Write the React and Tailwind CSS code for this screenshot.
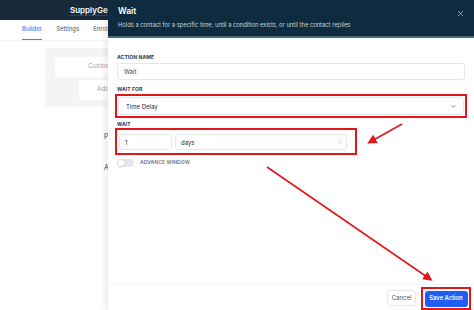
import { X, ChevronDown, ChevronsUpDown } from 'lucide-react';

const Label = ({ children }) => (
    <div className="text-[5px] font-bold tracking-[0.02em] text-[#2d3748] leading-none">{children}</div>
);

function BackgroundPage() {
    return (
        <div className="absolute inset-0 bg-white">
            {/* top bar */}
            <div className="h-[20px] bg-[#182a3a] flex items-center pl-[70px]">
                <span className="text-[8px] font-semibold text-white border-b border-[#8a2030] leading-[10px]">SupplyGen</span>
            </div>
            {/* tabs */}
            <div className="h-[21px] flex items-end gap-[14px] pl-[22px] border-b border-gray-100 text-[6px]">
                <div className="text-[#3b82f6] font-medium pb-[6px] border-b border-[#3b82f6]">Builder</div>
                <div className="text-gray-600 pb-[7px]">Settings</div>
                <div className="text-gray-600 pb-[7px]">Enrollment</div>
            </div>
            {/* workflow canvas */}
            <div className="ml-[45px] mt-[7px] w-[80px] h-[59px] bg-[#f3f4f6] rounded-[3px] pt-[9px] pl-[10px] flex flex-col gap-[3px]">
                <div className="h-[20px] w-[70px] bg-white rounded-[3px] flex items-center pl-[33px] text-[6.5px] text-gray-400">Custom</div>
                <div className="h-[20px] w-[46px] ml-[24px] bg-white rounded-[3px] flex items-center pl-[18px] text-[6.5px] text-gray-400">Add</div>
            </div>
            <div className="ml-[104px] mt-[26px] text-[7px] text-gray-700 leading-none">P</div>
            <div className="ml-[104px] mt-[24px] text-[7px] text-gray-700 leading-none">A</div>
        </div>
    );
}

function Arrows() {
    return (
        <svg className="absolute inset-0 pointer-events-none" width="474" height="310" viewBox="0 0 474 310">
            <defs>
                <marker id="head" markerWidth="6" markerHeight="6" refX="4" refY="3" orient="auto" markerUnits="strokeWidth">
                    <path d="M0,0 L6,3 L0,6 Z" fill="#e3161c" />
                </marker>
            </defs>
            <line x1="402" y1="124" x2="370" y2="142" stroke="#e3161c" strokeWidth="1.6" markerEnd="url(#head)" />
            <line x1="267" y1="167" x2="430" y2="279" stroke="#e3161c" strokeWidth="1.6" markerEnd="url(#head)" />
        </svg>
    );
}

export default function App() {
    return (
        <div className="relative w-[474px] h-[310px] overflow-hidden bg-white" style={{ fontFamily: 'Inter, "Liberation Sans", sans-serif' }}>
            <BackgroundPage />

            {/* side panel */}
            <div className="absolute top-0 right-0 w-[366px] h-full bg-white flex flex-col shadow-[-3px_0_6px_rgba(0,0,0,0.08)]">
                <div className="h-[38px] bg-[#0e2b40] border-b-[2px] border-[#4b6b80] px-[10px] pt-[7px] relative">
                    <div className="text-[8.5px] font-semibold text-white leading-[9px]">Wait</div>
                    <div className="mt-[5px] text-[5.8px] text-[#c9d3db] leading-[7px]">
                        Holds a contact for a specific time, until a condition exists, or until the contact replies
                    </div>
                    <X className="absolute right-[9px] top-[9px] text-[#b8c4ce]" size={9} strokeWidth={2} />
                </div>

                <div className="flex-1 px-[9px] pt-[17px]">
                    <Label>ACTION NAME</Label>
                    <div className="mt-[3px] h-[17px] border border-gray-200 rounded-[3px] flex items-center pl-[6px] text-[6px] text-gray-700">Wait</div>

                    <div className="mt-[7px]"><Label>WAIT FOR</Label></div>
                    <div className="mt-[2px] -mx-[2px] border-[2px] border-[#e3161c] p-[1px]">
                        <div className="h-[18px] border border-gray-200 rounded-[3px] flex items-center justify-between pl-[7px] pr-[6px] text-[6px] text-gray-800">
                            <span>Time Delay</span>
                            <ChevronDown size={7} strokeWidth={2.2} className="text-gray-600" />
                        </div>
                    </div>

                    <div className="mt-[4px]"><Label>WAIT</Label></div>
                    <div className="mt-[1px] -ml-[2px] w-[242px] h-[27px] border-[2px] border-[#e3161c] pl-[2px] pr-[8px] pt-[4px] flex gap-[3px]">
                        <div className="w-[53px] h-[16px] border border-gray-200 rounded-[3px] flex items-center pl-[5px] text-[6px] text-gray-800">1</div>
                        <div className="flex-1 h-[16px] border border-gray-200 rounded-[3px] flex items-center justify-between pl-[5px] pr-[3px] text-[6px] text-gray-800">
                            <span>days</span>
                            <ChevronsUpDown size={6} strokeWidth={1.6} className="text-gray-400" />
                        </div>
                    </div>

                    <div className="mt-[4px] flex items-center gap-[6px]">
                        <div className="w-[17px] h-[8px] rounded-full bg-[#e5e7eb] p-[1px] flex">
                            <div className="w-[6px] h-[6px] rounded-full bg-white shadow-sm" />
                        </div>
                        <span className="text-[5px] font-semibold text-gray-500 tracking-[0.02em]">ADVANCE WINDOW</span>
                    </div>
                </div>

                <div className="h-[26px] border-t border-gray-100 flex items-center justify-end gap-[5px] pr-[3px]">
                    <div className="h-[16px] w-[29px] border border-gray-200 rounded-[3px] flex items-center justify-center text-[6px] text-gray-600">Cancel</div>
                    <div className="border-[2px] border-[#e3161c] p-[1.5px] mt-[2px]">
                        <div className="h-[16px] w-[43px] bg-[#1f5ef2] rounded-[3px] flex items-center justify-center text-[5.8px] font-semibold text-white">Save Action</div>
                    </div>
                </div>
            </div>

            <Arrows />
        </div>
    );
}
